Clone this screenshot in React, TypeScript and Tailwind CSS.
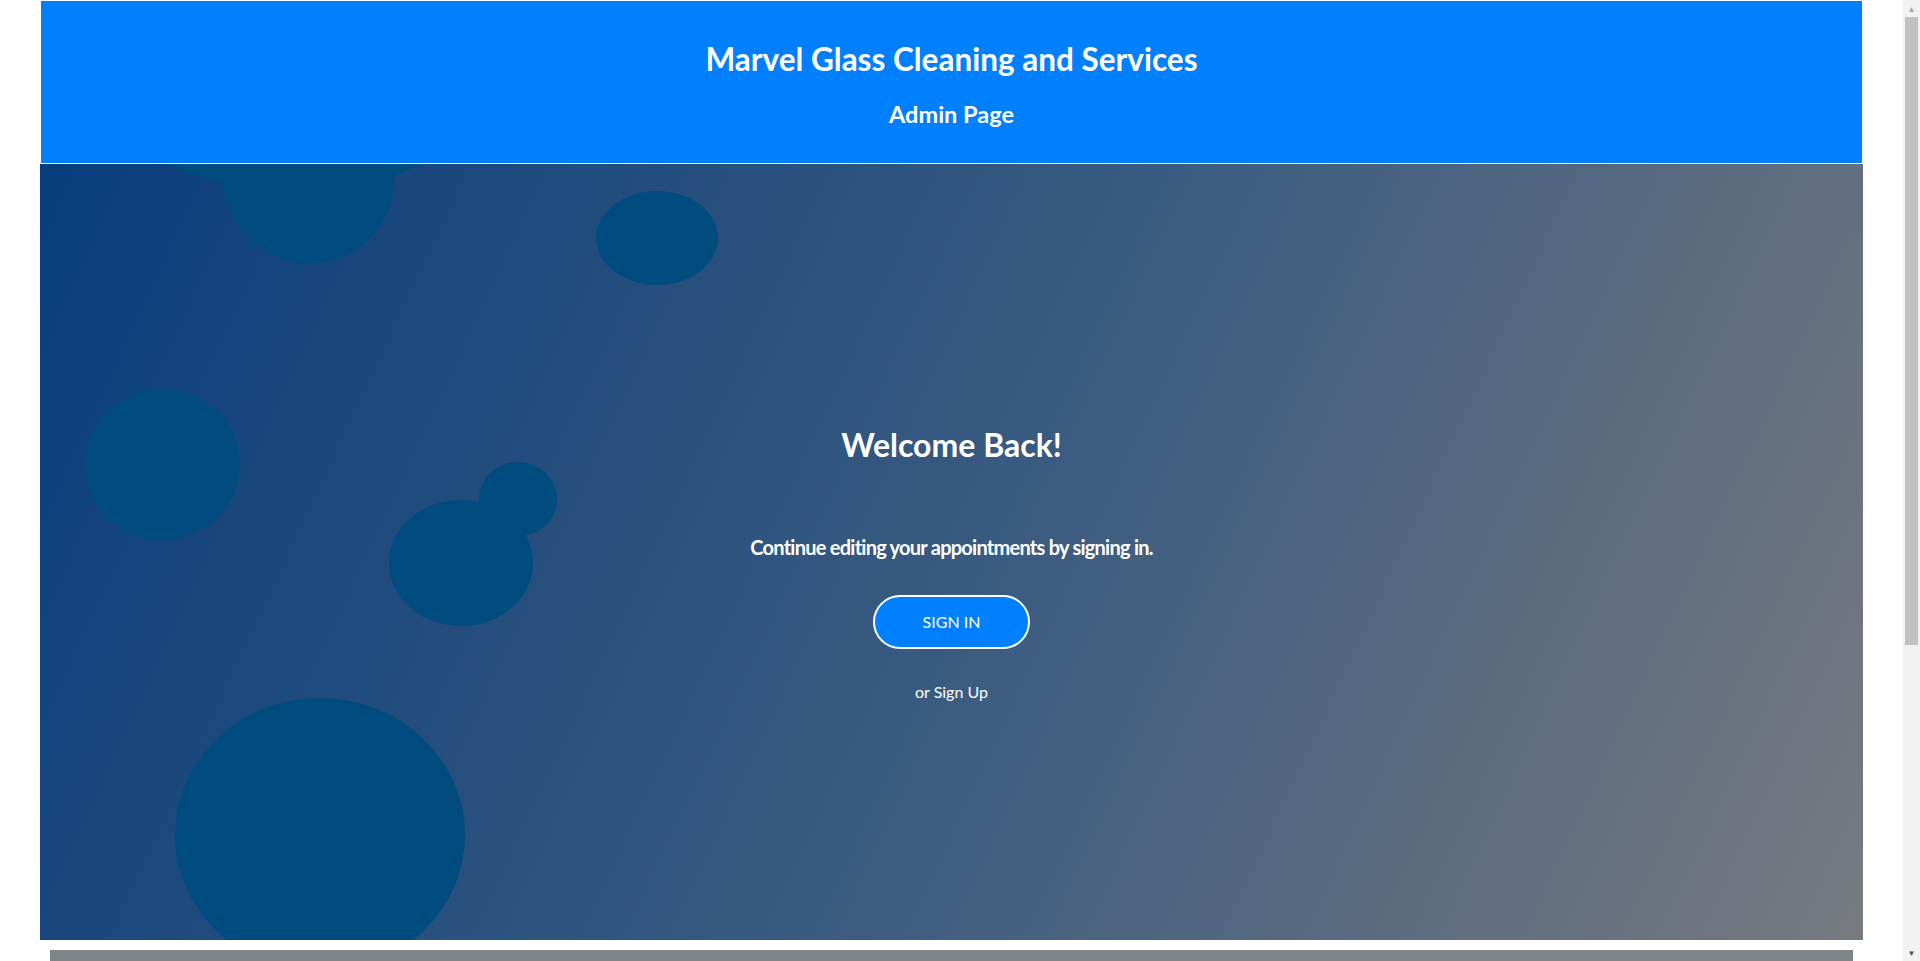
// App.tsx
import React from "react";

type Blob = {
  left: number;
  top: number;
  width: number;
  height: number;
};

// bubble decorations on the hero, positions relative to the hero box
const blobs: Blob[] = [
  { left: 95, top: -105, width: 320, height: 130 },
  { left: 184, top: -67, width: 170, height: 166 },
  { left: 556, top: 27, width: 122, height: 94 },
  { left: 45, top: 225, width: 155, height: 151 },
  { left: 439, top: 298, width: 78, height: 74 },
  { left: 349, top: 336, width: 144, height: 126 },
  { left: 135, top: 534, width: 290, height: 274 },
];

const Header: React.FC = () => {
  return (
    <header className="h-[164px] border border-white bg-[#0080ff] text-white text-center pt-[40px]">
      <h1 className="text-[31.5px] leading-[1.2] font-bold">
        Marvel Glass Cleaning and Services
      </h1>
      <h2 className="mt-[21px] text-[23.5px] leading-[1.2] font-bold">
        Admin Page
      </h2>
    </header>
  );
};

const Hero: React.FC = () => {
  return (
    <section className="relative h-[776px] overflow-hidden bg-[linear-gradient(115deg,#083d7c_0%,#3a5b80_52%,#787a80_100%)]">
      {blobs.map((b, i) => (
        <div
          key={i}
          className="absolute rounded-[50%] bg-[#004c7e]"
          style={{ left: b.left, top: b.top, width: b.width, height: b.height }}
        />
      ))}
      <div className="relative z-10 flex flex-col items-center pt-[262px] text-white">
        <h2 className="text-[32px] leading-[1.2] font-bold">Welcome Back!</h2>
        <p className="mt-[71px] text-[20px] leading-[1.2] font-bold tracking-[-0.75px]">
          Continue editing your appointments by signing in.
        </p>
        <button className="mt-[36px] w-[157px] h-[54px] rounded-full border-2 border-white bg-[#0080ff] text-[16px] text-white">
          SIGN IN
        </button>
        <a href="#" className="mt-[33px] text-[16px] leading-[1.2] text-white">
          or Sign Up
        </a>
      </div>
    </section>
  );
};

// the page's classic scrollbar, as it shows in the window
const ScrollBar: React.FC = () => {
  return (
    <aside className="w-[17px] shrink-0 flex flex-col bg-[#f1f1f1]">
      <div className="h-[17px] flex items-center justify-center text-[8px] leading-none text-[#a3a3a3]">
        ▲
      </div>
      <div className="mx-[2px] h-[628px] bg-[#c1c1c1]" />
      <div className="flex-1" />
      <div className="h-[17px] flex items-center justify-center text-[8px] leading-none text-[#505050]">
        ▼
      </div>
    </aside>
  );
};

const App: React.FC = () => {
  return (
    <div className="flex h-screen overflow-hidden bg-white font-['Lato','Liberation_Sans',sans-serif]">
      <main className="flex-1 overflow-hidden">
        <div className="mx-[40px]">
          <Header />
          <Hero />
          <div className="mx-[10px] mt-[10px] h-[450px] bg-[#808486]" />
        </div>
      </main>
      <ScrollBar />
    </div>
  );
};

export default App;
